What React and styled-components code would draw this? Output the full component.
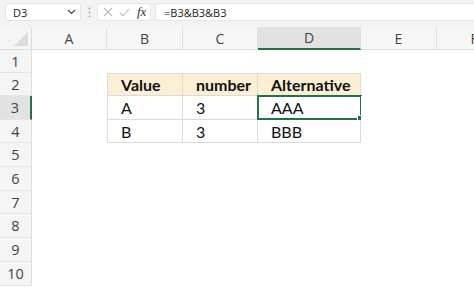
import React from "react";
import styled, { createGlobalStyle, css } from "styled-components";

const GlobalStyle = createGlobalStyle`
  html, body {
    margin: 0;
    padding: 0;
    background: #ffffff;
  }
  body {
    font-family: "Open Sans", "Noto Sans", sans-serif;
  }
`;

const Window = styled.div`
  width: 474px;
  height: 291px;
  overflow: hidden;
  background: #ffffff;
  display: flex;
  flex-direction: column;
`;

const FormulaBar = styled.div`
  height: 27px;
  box-sizing: border-box;
  padding: 3px 0 6px 5px;
  background: #f3f3f3;
  display: flex;
  align-items: stretch;
`;

const NameBox = styled.div`
  width: 76px;
  box-sizing: border-box;
  background: #ffffff;
  border: 1px solid #e3e3e3;
  border-radius: 3px;
  display: flex;
  align-items: center;
  justify-content: space-between;
  padding: 0 4px 0 7px;
  font-size: 11px;
  color: #222222;
`;

const Grip = styled.div`
  width: 16px;
  display: flex;
  align-items: center;
  justify-content: center;
`;

const ActionBox = styled.div`
  width: 54px;
  box-sizing: border-box;
  background: #ffffff;
  border: 1px solid #e6e6e6;
  border-radius: 3px;
  display: flex;
  align-items: center;
  padding: 0 3px 0 5px;
  gap: 6px;
`;

const Fx = styled.span`
  font-family: "Liberation Serif", serif;
  font-style: italic;
  font-size: 13px;
  color: #333333;
  margin-left: 1px;
`;

const FormulaInput = styled.div`
  flex: 1;
  margin-left: 4px;
  background: #ffffff;
  border: 1px solid #e6e6e6;
  border-right: none;
  border-radius: 3px 0 0 3px;
  display: flex;
  align-items: center;
  padding-left: 8px;
  font-size: 11px;
  color: #222222;
`;

const Sheet = styled.div`
  display: grid;
  grid-template-columns: 32px 75px 76px 75px 103px 76px 75px;
  grid-template-rows: 23px 23px 23px 24px 23px 24px 24px 23px 24px 24px 24px;
`;

const Corner = styled.div`
  background: #f5f5f5;
  border-right: 1px solid #dcdcdc;
  border-bottom: 1px solid #dcdcdc;
  box-sizing: border-box;
  display: flex;
  align-items: flex-end;
  justify-content: flex-end;
  padding: 0 3px 3px 0;
`;

const ColHeader = styled.div`
  box-sizing: border-box;
  display: flex;
  align-items: center;
  justify-content: center;
  font-size: 14px;
  color: #444444;
  background: ${(p) => (p.$active ? "#e2e2e2" : "#f7f7f7")};
  border-right: 1px solid #e0e0e0;
  border-bottom: ${(p) => (p.$active ? "2px solid #217346" : "1px solid #dcdcdc")};
`;

const RowHeader = styled.div`
  box-sizing: border-box;
  display: flex;
  align-items: center;
  justify-content: center;
  font-size: 14.5px;
  color: #444444;
  background: ${(p) => (p.$active ? "#e2e2e2" : "#f5f5f5")};
  border-right: ${(p) => (p.$active ? "2px solid #217346" : "1px solid #dcdcdc")};
  border-bottom: 1px solid #e6e6e6;
`;

const Cell = styled.div`
  box-sizing: border-box;
  position: relative;
  display: flex;
  align-items: center;
  padding-left: 13px;
  font-family: "Lato", "Liberation Sans", sans-serif;
  font-size: 16px;
  color: #111111;
  background: #ffffff;
  ${(p) =>
    p.$table &&
    css`
      border-right: 1px solid #dadada;
      border-bottom: 1px solid #dadada;
    `}
  ${(p) => p.$first && css`border-left: 1px solid #dadada;`}
  ${(p) =>
    p.$head &&
    css`
      background: #fcefd3;
      font-weight: bold;
      border-top: 1px solid #dadada;
    `}
`;

const Selection = styled.div`
  position: absolute;
  left: -1px;
  top: -1px;
  right: -2px;
  bottom: -1px;
  border: 2px solid #217346;
  pointer-events: none;
`;

const FillHandle = styled.div`
  position: absolute;
  right: -4px;
  bottom: -4px;
  width: 5px;
  height: 5px;
  background: #217346;
  border: 1px solid #ffffff;
`;

const cols = ["A", "B", "C", "D", "E", "F"];

const tableData = {
  2: ["Value", "number", "Alternative"],
  3: ["A", "3", "AAA"],
  4: ["B", "3", "BBB"],
};

const Chevron = () => (
  <svg width="9" height="6" viewBox="0 0 9 6">
    <path d="M1 1l3.5 3.5L8 1" fill="none" stroke="#444" strokeWidth="1.2" />
  </svg>
);

const Dots = () => (
  <svg width="3" height="11" viewBox="0 0 3 11">
    <circle cx="1.5" cy="1.5" r="0.9" fill="#a8a8a8" />
    <circle cx="1.5" cy="5.5" r="0.9" fill="#a8a8a8" />
    <circle cx="1.5" cy="9.5" r="0.9" fill="#a8a8a8" />
  </svg>
);

const Cross = () => (
  <svg width="10" height="10" viewBox="0 0 10 10">
    <path d="M1 1l8 8M9 1l-8 8" stroke="#bcbcbc" strokeWidth="1.1" />
  </svg>
);

const Check = () => (
  <svg width="11" height="9" viewBox="0 0 11 9">
    <path d="M1 5l3 3 6-7" fill="none" stroke="#bcbcbc" strokeWidth="1.1" />
  </svg>
);

const SelectAll = () => (
  <svg width="14" height="14" viewBox="0 0 14 14">
    <path d="M14 0v14H0z" fill="#dcdcdc" />
  </svg>
);

const App = () => {
  const rows = [1, 2, 3, 4, 5, 6, 7, 8, 9, 10];

  return (
    <Window>
      <GlobalStyle />
      <FormulaBar>
        <NameBox>
          <span>D3</span>
          <Chevron />
        </NameBox>
        <Grip>
          <Dots />
        </Grip>
        <ActionBox>
          <Cross />
          <Check />
          <Fx>fx</Fx>
        </ActionBox>
        <FormulaInput>=B3&amp;B3&amp;B3</FormulaInput>
      </FormulaBar>
      <Sheet>
        <Corner>
          <SelectAll />
        </Corner>
        {cols.map((c) => (
          <ColHeader key={c} $active={c === "D"}>
            {c}
          </ColHeader>
        ))}
        {rows.map((r) => (
          <React.Fragment key={r}>
            <RowHeader $active={r === 3}>{r}</RowHeader>
            <Cell />
            {[0, 1, 2].map((i) => {
              const data = tableData[r];
              const isSel = r === 3 && i === 2;
              return (
                <Cell
                  key={i}
                  $table={!!data}
                  $first={!!data && i === 0}
                  $head={r === 2}
                >
                  {data ? data[i] : null}
                  {isSel && (
                    <Selection>
                      <FillHandle />
                    </Selection>
                  )}
                </Cell>
              );
            })}
            <Cell />
            <Cell />
          </React.Fragment>
        ))}
      </Sheet>
    </Window>
  );
};

export default App;
